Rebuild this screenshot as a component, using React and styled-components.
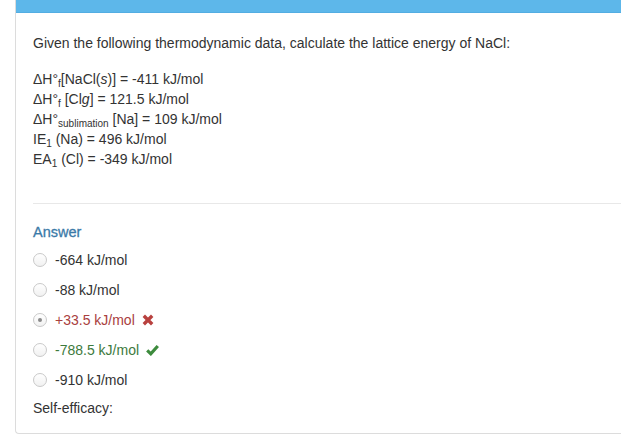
import React from 'react';
import styled, { createGlobalStyle } from 'styled-components';

const GlobalStyle = createGlobalStyle`
  html, body {
    margin: 0;
    padding: 0;
    background: #fff;
    overflow: hidden;
  }
  body {
    font-family: 'Liberation Sans', Arial, Helvetica, sans-serif;
    font-size: 14px;
    line-height: 20px;
    color: #333;
  }
`;

const Panel = styled.div`
  margin-left: 15px;
  height: 434px;
  box-sizing: border-box;
  border: 1px solid #dcdcdc;
  border-top: none;
  border-right: none;
  border-radius: 0 0 0 4px;
  display: flex;
  flex-direction: column;
`;

const PanelHeading = styled.div`
  height: 12px;
  background: #5db7ea;
  border-bottom: 1px solid #53ade2;
`;

const PanelBody = styled.div`
  padding: 20px 0 0 17px;
  display: flex;
  flex-direction: column;
`;

const Question = styled.p`
  margin: 0;
`;

const DataList = styled.div`
  margin-top: 16px;
  display: flex;
  flex-direction: column;
`;

const DataLine = styled.div`
  line-height: 20px;

  sub {
    font-size: 10px;
    line-height: 0;
    vertical-align: -3px;
  }
`;

const Divider = styled.hr`
  margin: 34px 0 0;
  border: none;
  border-top: 1px solid #e8e8e8;
  height: 0;
`;

const AnswerTitle = styled.div`
  margin-top: 18px;
  color: #3b7aa8;
  font-size: 14.5px;
  -webkit-text-stroke: 0.3px #3b7aa8;
`;

const Options = styled.div`
  margin-top: 3px;
  display: flex;
  flex-direction: column;
`;

const OptionRow = styled.label`
  height: 30px;
  display: flex;
  align-items: center;
  gap: 7px;
  color: ${(p) =>
    p.status === 'wrong' ? '#a9403e' : p.status === 'right' ? '#3d7a3d' : '#333'};
`;

const Radio = styled.span`
  width: 12px;
  height: 12px;
  margin-right: 1px;
  border-radius: 50%;
  border: 1px solid #c9c9c9;
  background: linear-gradient(#ffffff, #f1f1f1);
  display: flex;
  align-items: center;
  justify-content: center;

  &::after {
    content: '';
    width: 4px;
    height: 4px;
    border-radius: 50%;
    background: #8a8a8a;
    display: ${(p) => (p.checked ? 'block' : 'none')};
  }
`;

const SelfEfficacy = styled.div`
  margin-top: 3px;
`;

const CrossIcon = () => (
  <svg width="12" height="12" viewBox="0 0 12 12">
    <path
      d="M1.8 1.8 L10.2 10.2 M10.2 1.8 L1.8 10.2"
      stroke="#b8413e"
      strokeWidth="3.4"
      strokeLinecap="butt"
    />
  </svg>
);

const CheckIcon = () => (
  <svg width="13" height="12" viewBox="0 0 13 12">
    <path
      d="M1.2 6.4 L4.8 9.8 L11.8 2"
      fill="none"
      stroke="#3d8b3d"
      strokeWidth="3.2"
      strokeLinejoin="miter"
    />
  </svg>
);

const options = [
  { label: '-664 kJ/mol' },
  { label: '-88 kJ/mol' },
  { label: '+33.5 kJ/mol', checked: true, status: 'wrong' },
  { label: '-788.5 kJ/mol', status: 'right' },
  { label: '-910 kJ/mol' },
];

const App = () => (
  <>
    <GlobalStyle />
    <Panel>
      <PanelHeading />
      <PanelBody>
        <Question>
          Given the following thermodynamic data, calculate the lattice energy of NaCl:
        </Question>
        <DataList>
          <DataLine>
            ΔH°<sub>f</sub>[NaCl(<i>s</i>)] = -411 kJ/mol
          </DataLine>
          <DataLine>
            ΔH°<sub>f</sub> [Cl<i>g</i>] = 121.5 kJ/mol
          </DataLine>
          <DataLine>
            ΔH°<sub>sublimation</sub> [Na] = 109 kJ/mol
          </DataLine>
          <DataLine>
            IE<sub>1</sub> (Na) = 496 kJ/mol
          </DataLine>
          <DataLine>
            EA<sub>1</sub> (Cl) = -349 kJ/mol
          </DataLine>
        </DataList>
        <Divider />
        <AnswerTitle>Answer</AnswerTitle>
        <Options>
          {options.map((o) => (
            <OptionRow key={o.label} status={o.status}>
              <Radio checked={o.checked} />
              <span>{o.label}</span>
              {o.status === 'wrong' && <CrossIcon />}
              {o.status === 'right' && <CheckIcon />}
            </OptionRow>
          ))}
        </Options>
        <SelfEfficacy>Self-efficacy:</SelfEfficacy>
      </PanelBody>
    </Panel>
  </>
);

export default App;
